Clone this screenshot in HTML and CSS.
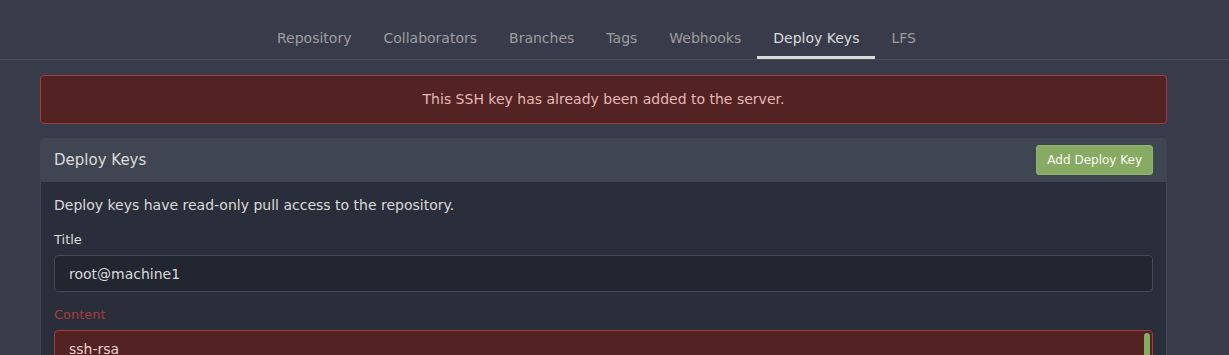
FILE: index.html
```html
<!DOCTYPE html>
<html lang="en">
<head>
<meta charset="utf-8">
<title>Deploy Keys</title>
<link rel="stylesheet" href="styles.css">
</head>
<body>
<nav class="tabs">
  <a class="tab">Repository</a>
  <a class="tab">Collaborators</a>
  <a class="tab">Branches</a>
  <a class="tab">Tags</a>
  <a class="tab">Webhooks</a>
  <a class="tab active">Deploy Keys</a>
  <a class="tab">LFS</a>
</nav>
<main class="container">
  <div class="flash-error">This SSH key has already been added to the server.</div>
  <section class="card">
    <header class="card-header">
      <h4 class="card-title">Deploy Keys</h4>
      <button class="btn-green">Add Deploy Key</button>
    </header>
    <div class="card-body">
      <p class="help">Deploy keys have read-only pull access to the repository.</p>
      <div class="field">
        <label class="label">Title</label>
        <input class="input" type="text" value="root@machine1">
      </div>
      <div class="field error">
        <label class="label">Content</label>
        <div class="textarea-wrap">
          <textarea class="textarea">ssh-rsa AAAAB3NzaC1yc2EAAAADAQABAAABAQC7v2mQk5pX9dWJmXk0e2Lr8vB1pYbq3hTz0uN6vV4cQe7fKk9yR2xJ0aLmQpS8tWdF3gHjKlZxCvBnM1qW2eR3tY4uI5oP6aS7dF8gH9jK0lZ1xC2vB3nM4qW5eR6tY7uI8oP9aS0dF1gH2jK3lZ4xC5vB6nM7qW8eR9tY0uI1oP2aS3dF4gH5jK6lZ7xC8vB9nM0qW1eR2tY3uI4oP5aS6dF7gH8jK9lZ0xC1vB2nM3qW4eR5tY6uI7oP8aS9dF0gH1jK2lZ3xC4vB5nM6qW7eR8tY9uI0oP1aS2dF3gH4jK5lZ6xC7vB8nM9qW0eR1tY2uI3oP4aS5dF6gH7jK8lZ9xC0vB1nM2qW3eR4tY5uI6oP7aS8dF9gH0jK1lZ2xC3vB4nM5qW6eR7tY8uI9oP0aS1dF2gH3jK4lZ5xC6vB7nM8qW9eR0tY1uI2oP3aS4dF5gH6jK7lZ8xC9vB0nM1qW2eR3tY4uI5oP6aS7dF8gH9jK0 root@machine1</textarea>
          <span class="scroll-thumb"></span>
        </div>
      </div>
    </div>
  </section>
</main>
</body>
</html>
```

FILE: styles.css
```css
html {
  overflow: hidden;
}
body {
  margin: 0;
  background: #383c4a;
  font-family: "DejaVu Sans", "Liberation Sans", sans-serif;
  font-size: 14px;
  line-height: 20px;
  color: #dbdbdb;
}

.tabs {
  display: flex;
  justify-content: flex-start;
  padding-left: 261px;
  border-bottom: 1px solid #4a4e5b;
  box-sizing: border-box;
  height: 60px;
}
.tab {
  display: block;
  padding: 28px 16px 8px;
  border-bottom: 3px solid transparent;
  color: #9e9e9e;
  font-size: 14px;
  line-height: 20px;
  cursor: pointer;
}
.tab.active {
  color: #dbdbdb;
  border-bottom-color: #dbdbdb;
}

.container {
  width: 1127px;
  margin: 15px 0 0 40px;
}

.flash-error {
  background: #532222;
  border: 1px solid #a43b3d;
  border-radius: 4px;
  color: #e5b9b9;
  text-align: center;
  padding: 13px 16px 14px;
}

.card {
  margin-top: 14px;
  border-radius: 4px;
}
.card-header {
  display: flex;
  align-items: center;
  justify-content: space-between;
  background: #404552;
  border-radius: 4px 4px 0 0;
  padding: 7px 14px;
  height: 44px;
  box-sizing: border-box;
}
.card-title {
  margin: 0;
  font-size: 15px;
  font-weight: normal;
  color: #dbdbdb;
}
.btn-green {
  height: 30px;
  padding: 0 10px;
  background: #87ab63;
  border: 1px solid #93b470;
  border-radius: 3px;
  color: #f8faf5;
  font-family: inherit;
  font-size: 12px;
  cursor: pointer;
}

.card-body {
  background: #2a2e3a;
  border: 1px solid #404552;
  border-top: none;
  padding: 13px 13px 14px;
}
.help {
  margin: 0 0 16px;
}
.field {
  display: flex;
  flex-direction: column;
}
.field + .field {
  margin-top: 14px;
}
.label {
  font-size: 13px;
  line-height: 18px;
  margin-bottom: 6px;
  color: #dbdbdb;
}
.input {
  height: 37px;
  box-sizing: border-box;
  background: #222631;
  border: 1px solid #454a57;
  border-radius: 4px;
  padding: 0 14px;
  color: #dbdbdb;
  font-family: inherit;
  font-size: 14px;
  outline: none;
}
.field.error .label {
  color: #a63c3f;
}
.textarea-wrap {
  position: relative;
  display: flex;
}
.textarea {
  flex: 1;
  height: 180px;
  box-sizing: border-box;
  background: #532222;
  border: 1px solid #a43b3d;
  border-radius: 4px;
  padding: 8px 20px 8px 14px;
  color: #e8d2d2;
  font-family: inherit;
  font-size: 14px;
  line-height: 20px;
  resize: none;
  outline: none;
  overflow: hidden;
}
.scroll-thumb {
  position: absolute;
  top: 3px;
  right: 3px;
  width: 6px;
  height: 90px;
  background: #87ab63;
  border-radius: 3px;
}
```
